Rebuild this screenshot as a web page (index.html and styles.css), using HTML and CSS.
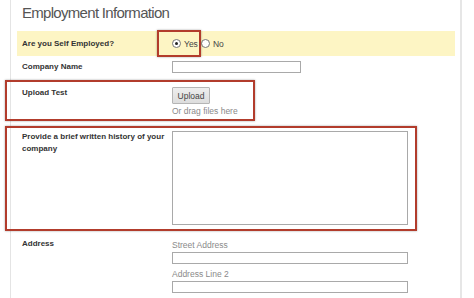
FILE: index.html
```html
<!DOCTYPE html>
<html lang="en">
<head>
	<meta charset="UTF-8">
	<title>Employment Information</title>
	<link rel="stylesheet" href="styles.css">
</head>
<body>
	<div class="panel">
		<h2 class="title">Employment Information</h2>

		<div class="row row-yellow">
			<div class="label">Are you Self Employed?</div>
			<div class="field radios">
				<span class="radio checked"></span><span class="opt">Yes</span>
				<span class="radio"></span><span class="opt">No</span>
				<div class="mark mark-yes"></div>
			</div>
		</div>

		<div class="row row-company">
			<div class="label">Company Name</div>
			<div class="field">
				<div class="input input-short"></div>
			</div>
		</div>

		<div class="row row-upload">
			<div class="label">Upload Test</div>
			<div class="field">
				<button class="btn">Upload</button>
				<div class="hint">Or drag files here</div>
			</div>
			<div class="mark mark-upload"></div>
		</div>

		<div class="row row-history">
			<div class="label">Provide a brief written history of your company</div>
			<div class="field">
				<div class="textarea"></div>
			</div>
			<div class="mark mark-history"></div>
		</div>

		<div class="row row-address">
			<div class="label">Address</div>
			<div class="field">
				<div class="hint hint-top">Street Address</div>
				<div class="input"></div>
				<div class="hint hint-mid">Address Line 2</div>
				<div class="input"></div>
			</div>
		</div>
	</div>
</body>
</html>
```

FILE: styles.css
```css
body {
	margin: 0;
	background: #fff;
	font-family: "Liberation Sans", Arial, sans-serif;
	color: #333;
}

.panel {
	margin-left: 10px;
	width: 449px;
	height: 298px;
	border-left: 1px solid #e4e4e4;
	border-right: 2px solid #e6e6e6;
}

.title {
	margin: 0;
	padding: 4px 0 0 11px;
	height: 27px;
	box-sizing: border-box;
	font-size: 15px;
	font-weight: normal;
	color: #555;
	letter-spacing: -0.7px;
}

.row {
	position: relative;
	display: grid;
	grid-template-columns: 150px 1fr;
	margin: 0 5px 0 6px;
	padding-left: 5px;
}

.label {
	font-size: 8px;
	font-weight: bold;
	color: #333;
	line-height: 12px;
}

.row-yellow {
	margin-top: 4px;
	height: 25px;
	align-items: center;
	background: #fdf5c4;
}

.radios {
	position: relative;
	align-self: stretch;
	display: flex;
	align-items: center;
	font-size: 8.5px;
	color: #444;
}

.radio {
	width: 7px;
	height: 7px;
	border: 1px solid #777;
	border-radius: 50%;
	background: #fff;
	position: relative;
	margin-right: 3px;
}

.radio.checked::after {
	content: "";
	position: absolute;
	left: 2px;
	top: 2px;
	width: 3px;
	height: 3px;
	border-radius: 50%;
	background: #222;
}

.opt {
	margin-right: 3px;
}

.mark {
	position: absolute;
	border: 2px solid #b23c2c;
	box-shadow: 0 0 2px rgba(0, 0, 0, 0.35);
	pointer-events: none;
}

.mark-yes {
	left: -15px;
	top: -1px;
	width: 40px;
	height: 23px;
}

.row-company {
	padding-top: 5px;
	height: 22px;
	box-sizing: border-box;
}

.input {
	height: 10px;
	border: 1px solid #a9a9a9;
	background: #fff;
	width: 234px;
}

.input-short {
	width: 127px;
}

.row-upload {
	margin-top: 2px;
	height: 41px;
	padding-top: 7px;
	box-sizing: border-box;
}

.mark-upload {
	left: -12px;
	top: 0;
	width: 246px;
	height: 37px;
}

.btn {
	display: block;
	margin: 0;
	width: 38px;
	height: 17px;
	padding: 0;
	font-family: "Liberation Sans", Arial, sans-serif;
	font-size: 8.5px;
	color: #444;
	background: linear-gradient(#eee, #ddd);
	border: 1px solid #b5b5b5;
	border-radius: 1px;
}

.hint {
	font-size: 8.5px;
	color: #8a8a8a;
	line-height: 12px;
}

.row-upload .hint {
	margin-top: 1px;
}

.row-history {
	margin-top: 5px;
	height: 104px;
	padding-top: 5px;
	box-sizing: border-box;
}

.mark-history {
	left: -12px;
	top: 0;
	width: 408px;
	height: 101px;
}

.textarea {
	width: 234px;
	height: 92px;
	border: 1px solid #a9a9a9;
	background: #fff;
}

.row-address {
	margin-top: 3px;
	padding-top: 5px;
}

.hint-top {
	margin-top: 1px;
	margin-bottom: 1px;
}

.hint-mid {
	margin-top: 4px;
	margin-bottom: 1px;
}
```
